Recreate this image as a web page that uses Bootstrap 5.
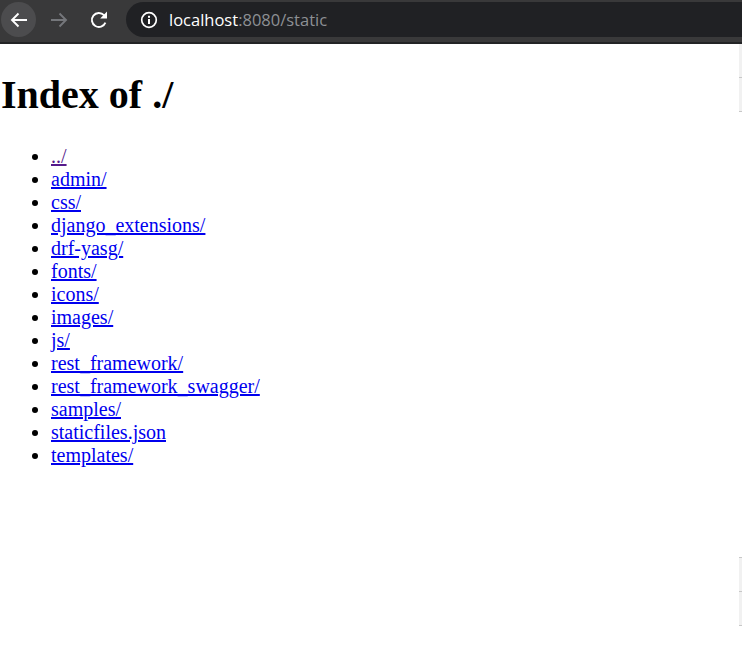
<!DOCTYPE html>
<html lang="en">
<head>
<meta charset="utf-8">
<title>Index of ./</title>
<link href="https://cdn.jsdelivr.net/npm/bootstrap@5.3.0/dist/css/bootstrap.min.css" rel="stylesheet">
<style>
html,body{height:100%;overflow:hidden}
body{background:#fff;color:#000;font-family:"Liberation Serif",serif;font-size:20px;line-height:23px}
.chrome-bar{height:44px;background:#39393a;border-top:2px solid #39393a;border-bottom:2px solid #232426;padding:0 0 5px 1px}
.nav-btn{width:35px;height:35px;flex:none;border-radius:50%;background:transparent}
.nav-btn svg{display:block}
.nav-btn.hovered{background:#4c4c4e}
.nav-btn.fwd{margin-left:5px}
.nav-btn.rel{margin-left:5px}
.omni{flex:1;height:35px;margin-left:10px;background:#202124;border-radius:18px 0 0 18px;padding-left:14px;font-family:"Open Sans","Liberation Sans",sans-serif;font-size:16.5px;line-height:35px}
.omni .host{color:#fff;margin-left:11px}
.omni .rest{color:#8d9094}
.page-title{font-family:"Liberation Serif",serif;font-size:40px;font-weight:700;line-height:46px;margin:28px 0 27px;padding-left:1px;color:#000}
.dir-list{list-style:disc;margin:0;padding-left:51px}
.dir-list a{color:#00e;text-decoration:underline;text-decoration-thickness:2px}
.dir-list a.seen{color:#551a8b}
.mark-strip{position:absolute;right:0;width:3px;background:#f1f1f1;border-bottom:1px solid #c8c8c8}
.mark-top{top:44px;height:34px}
.mark-top2{top:78px;height:34px}
.mark-bot0{top:557px;height:1px;background:#c8c8c8;border:0}
.mark-bot1{top:558px;height:34px}
.mark-bot2{top:592px;height:34px}
</style>
</head>
<body class="position-relative m-0">
<div class="chrome-bar d-flex align-items-center">
  <div class="nav-btn hovered d-flex align-items-center justify-content-center">
    <svg width="20" height="20" viewBox="0 0 20 20" fill="none" stroke="#fff" stroke-width="1.9"><path d="M18 10H3M9.5 3.5L3 10l6.5 6.5"/></svg>
  </div>
  <div class="nav-btn fwd d-flex align-items-center justify-content-center">
    <svg width="20" height="20" viewBox="0 0 20 20" fill="none" stroke="#75777b" stroke-width="1.9"><path d="M2 10h15M10.5 3.5L17 10l-6.5 6.5"/></svg>
  </div>
  <div class="nav-btn rel d-flex align-items-center justify-content-center">
    <svg width="20" height="20" viewBox="0 0 20 20" fill="none" stroke="#fff" stroke-width="1.9"><path d="M16.4 12.6A7 7 0 1 1 15 5.2L17 7.4"/><path d="M18 1.6V8.4H11.2Z" fill="#fff" stroke="none"/></svg>
  </div>
  <div class="omni d-flex align-items-center">
    <svg width="18" height="18" viewBox="0 0 18 18" fill="none"><circle cx="9" cy="9" r="7.3" stroke="#fff" stroke-width="1.7"/><rect x="8" y="8" width="2" height="5" fill="#fff"/><rect x="8" y="4.8" width="2" height="2" fill="#fff"/></svg>
    <span class="host">localhost<span class="rest">:8080/static</span></span>
  </div>
</div>
<h1 class="page-title">Index of ./</h1>
<ul class="dir-list">
  <li><a class="seen" href="#">../</a></li>
  <li><a href="#">admin/</a></li>
  <li><a href="#">css/</a></li>
  <li><a href="#">django_extensions/</a></li>
  <li><a href="#">drf-yasg/</a></li>
  <li><a href="#">fonts/</a></li>
  <li><a href="#">icons/</a></li>
  <li><a href="#">images/</a></li>
  <li><a href="#">js/</a></li>
  <li><a href="#">rest_framework/</a></li>
  <li><a href="#">rest_framework_swagger/</a></li>
  <li><a href="#">samples/</a></li>
  <li><a href="#">staticfiles.json</a></li>
  <li><a href="#">templates/</a></li>
</ul>
<div class="mark-strip mark-top"></div>
<div class="mark-strip mark-top2"></div>
<div class="mark-strip mark-bot0"></div>
<div class="mark-strip mark-bot1"></div>
<div class="mark-strip mark-bot2"></div>
<script src="https://cdn.jsdelivr.net/npm/bootstrap@5.3.0/dist/js/bootstrap.bundle.min.js"></script>
</body>
</html>
